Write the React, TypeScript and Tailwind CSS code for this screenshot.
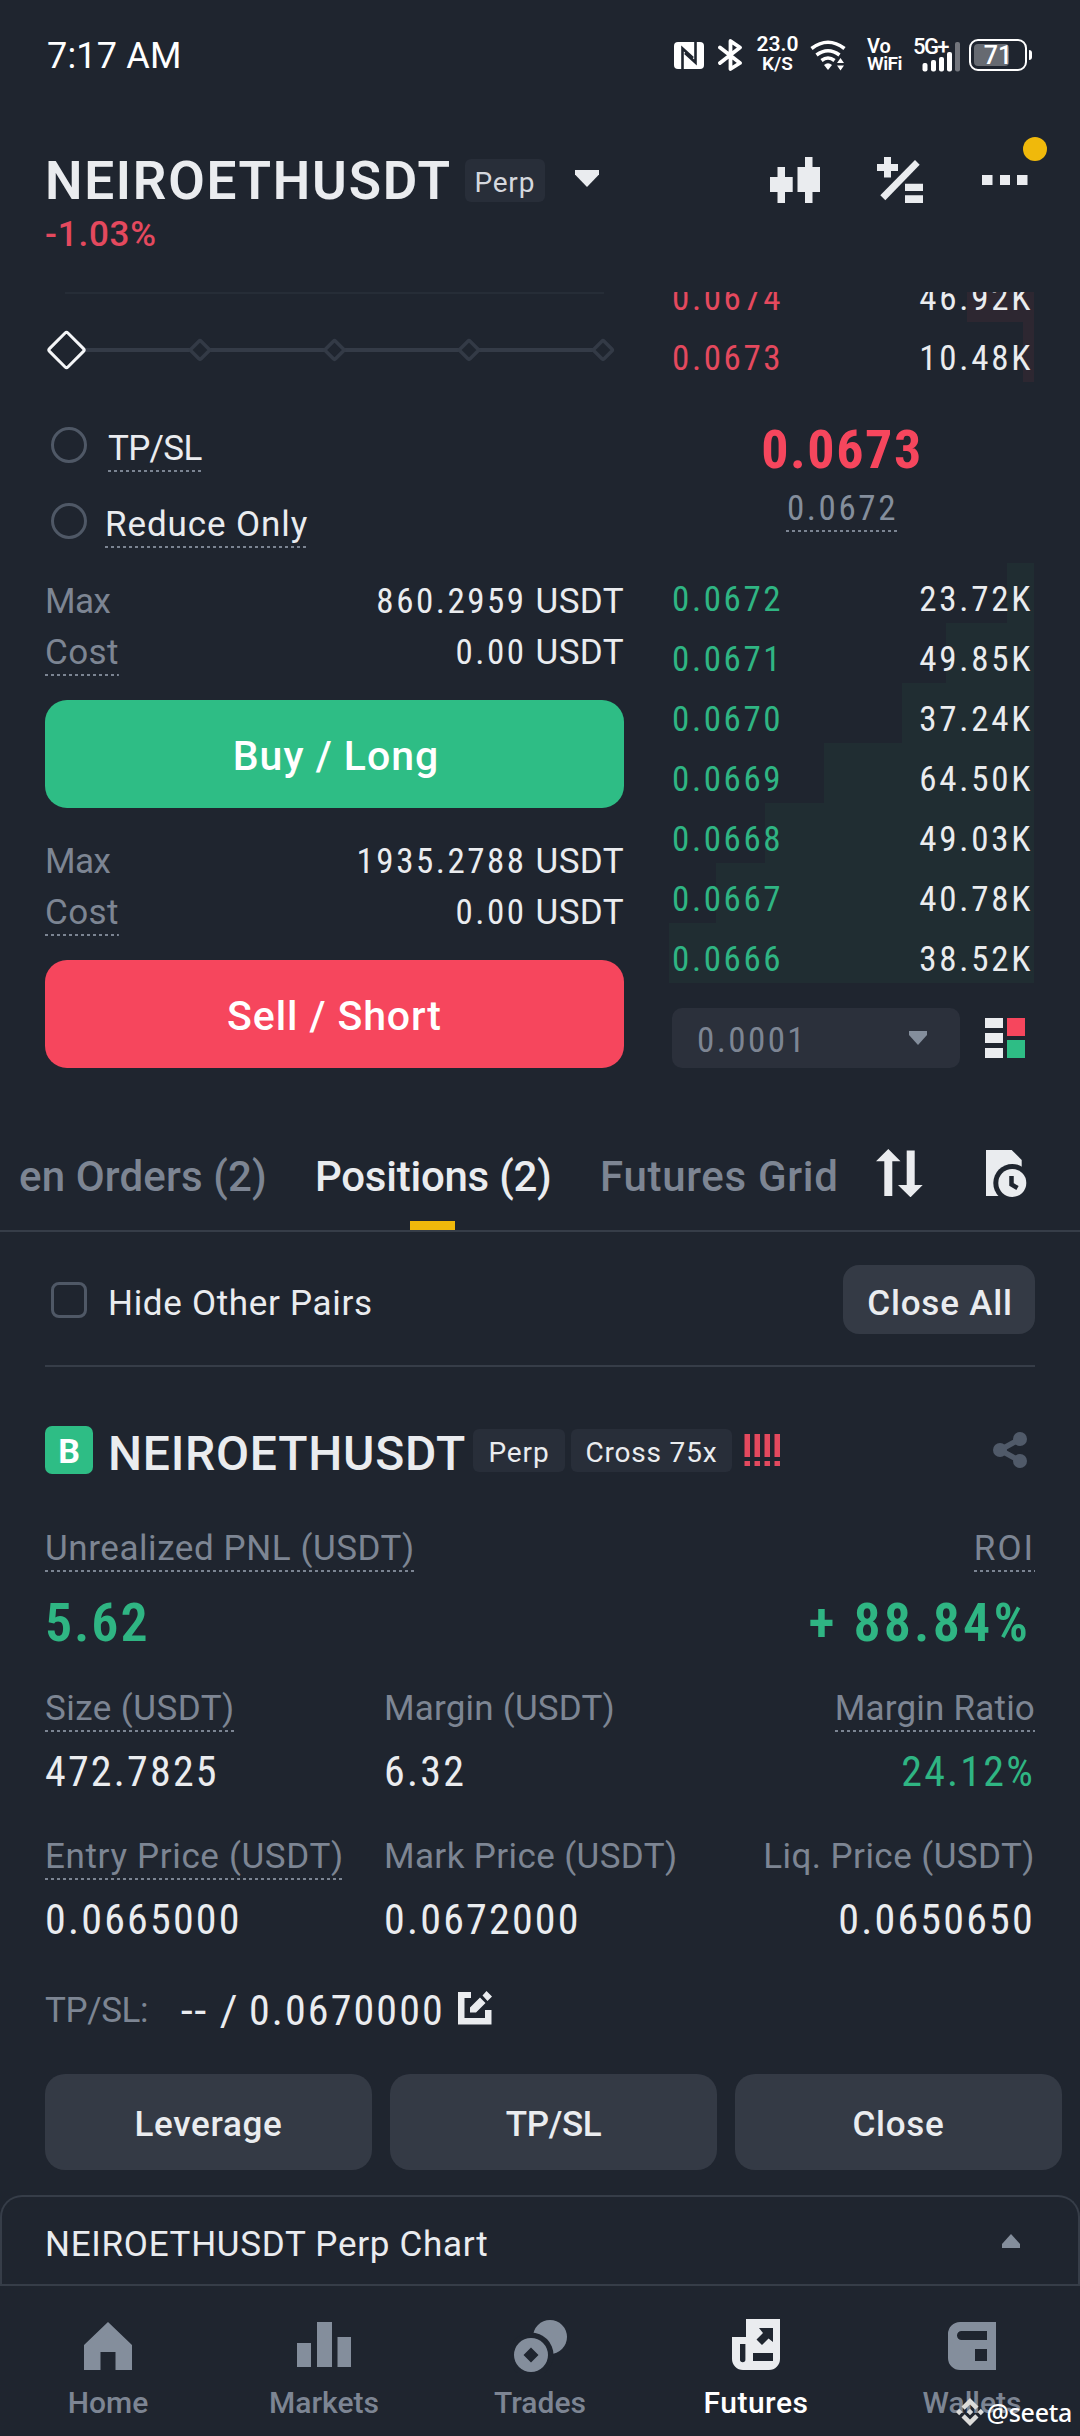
import type { ReactNode } from 'react';

const bids = [
  { price: '0.0672', size: '23.72K', depth: 27 },
  { price: '0.0671', size: '49.85K', depth: 88 },
  { price: '0.0670', size: '37.24K', depth: 132 },
  { price: '0.0669', size: '64.50K', depth: 210 },
  { price: '0.0668', size: '49.03K', depth: 269 },
  { price: '0.0667', size: '40.78K', depth: 318 },
  { price: '0.0666', size: '38.52K', depth: 365 },
];

const asks = [
  { price: '0.0674', size: '46.92K', depth: 67 },
  { price: '0.0673', size: '10.48K', depth: 11 },
];

function Hint({ children, className = '' }: { children: ReactNode; className?: string }) {
  return (
    <span
      className={`block h-[47px] leading-[48px] bg-[repeating-linear-gradient(90deg,#7b8492_0_3px,transparent_3px_6px)] bg-[length:100%_2px] bg-bottom bg-no-repeat ${className}`}
    >
      {children}
    </span>
  );
}

function StatusBar() {
  return (
    <div className="flex h-[110px] items-center justify-between pl-[47px] pr-[48px] text-white">
      <span className="pt-px text-[36px] tracking-[0.2px]">7:17 AM</span>
      <div className="flex items-center font-medium">
        <svg width="30" height="27" viewBox="0 0 30 27" className="mr-[14px]">
          <rect width="30" height="27" rx="4" fill="#fff" />
          <path d="M8.5 27V6.5L19 16M21.5 0V20.5L11 11" fill="none" stroke="#1f252f" strokeWidth="2.6" />
        </svg>
        <svg width="25" height="32" viewBox="0 0 25 32" className="mr-[15px]">
          <path d="M2 8.5L22 24L12.5 30V2L22 8.5L2 24" fill="none" stroke="#fff" strokeWidth="3.8" strokeLinejoin="round" strokeLinecap="round" />
        </svg>
        <div className="mr-[13px] flex w-[39px] flex-col items-center -mt-[3px]">
          <span className="text-[21px] font-semibold leading-[20px]">23.0</span>
          <span className="text-[19px] font-semibold leading-[20px]">K/S</span>
        </div>
        <svg width="37" height="31" viewBox="0 0 37 31" className="mr-[20px]">
          <g fill="none" stroke="#fff" strokeWidth="3.6">
            <path d="M1.5 8.5Q18 -4 34.5 8.5" />
            <path d="M6.5 15Q18 6.5 29.5 15" />
            <path d="M11.5 20.5Q18 15.5 24.5 20.5" />
          </g>
          <path d="M14 25Q18 21.5 22 25L18 30Z" fill="#fff" />
          <path d="M30.5 18L34 23H27ZM30.5 30.5L27 25.5H34Z" fill="#fff" />
        </svg>
        <div className="mr-[11px] flex w-[35px] flex-col -mt-px font-semibold">
          <span className="text-[20px] leading-[18px]">Vo</span>
          <span className="text-[19px] leading-[18px] tracking-[-0.5px]">WiFi</span>
        </div>
        <div className="relative mr-[9px] h-[34px] w-[47px]">
          <span className="block text-[22px] leading-[17px] tracking-[-1.6px]">5G+</span>
          <svg width="47" height="34" viewBox="0 0 47 34" className="absolute inset-0">
            <g fill="#fff">
              <rect x="9.5" y="25" width="5" height="8.5" rx="2" />
              <rect x="18" y="22" width="5" height="11.5" rx="2" />
              <rect x="26" y="19" width="5" height="14.5" rx="2" />
              <rect x="34" y="14" width="5" height="19.5" rx="2" />
            </g>
            <rect x="42" y="4" width="5" height="29.5" rx="2" fill="#73767d" />
          </svg>
        </div>
        <div className="relative flex h-[32px] w-[58px] items-center justify-center rounded-[9px] border-2 border-white">
          <div className="absolute left-[3px] top-[3px] h-[22px] w-[35px] rounded-[4px] bg-[#666a71]" />
          <span className="relative text-[25px] leading-none">71</span>
        </div>
        <div className="ml-[2px] h-[10px] w-[3px] rounded-r bg-white" />
      </div>
    </div>
  );
}

function Header() {
  return (
    <header className="relative h-[182px] pl-[45px] pr-[52px] pt-[30px]">
      <div className="flex h-[80px] items-center">
        <h1 className="pt-[2px] text-[53px] font-semibold leading-[80px] tracking-[1.72px]">NEIROETHUSDT</h1>
        <span className="ml-[13px] h-[43px] w-[80px] rounded-[6px] bg-[#282e39] text-center text-[28px] leading-[47px] tracking-[0.8px] text-[#d5d8de]">
          Perp
        </span>
        <svg width="24" height="17" viewBox="0 0 24 17" className="ml-[30px] -mt-[4px]">
          <path d="M0 0H24V4.5L12 17L0 4.5Z" fill="#eaecef" />
        </svg>
        <svg width="50" height="46" viewBox="0 0 50 46" className="ml-auto" fill="#eaecef">
          <path d="M7.5 10H15V20H22.7V35H15V46H7.5V35H0V20H7.5Z" />
          <path d="M35 0H42.5V10H50V35H42.5V46H35V35H27.5V10H35Z" />
        </svg>
        <svg width="46" height="46" viewBox="0 0 46 46" className="ml-[57px]" fill="#eaecef">
          <path d="M7 0H14V7H21V14H14V20.5H7V14H0V7H7Z" />
          <path d="M38 3L42.7 7.7L8.3 43.3L3.3 38.3Z" />
          <path d="M28 26.7H46V34H28ZM28 38.2H46V46H28Z" />
        </svg>
        <svg width="46" height="10" viewBox="0 0 46 10" className="ml-[59px]" fill="#eaecef">
          <path d="M0 0H10.5V10H0ZM18 0H28V10H18ZM35 0H45.5V10H35Z" />
        </svg>
      </div>
      <span className="absolute right-[33px] top-[27px] size-[24px] rounded-full bg-[#f0b90b]" />
      <div className="-mt-[9px] text-[35px] font-medium leading-[48px] tracking-[0.8px] text-[#e4495e]">-1.03%</div>
    </header>
  );
}

function Slider() {
  return (
    <svg width="579" height="50" viewBox="0 0 579 50" className="mt-[31px]" fill="#1f252f">
      <path d="M40 25H558" stroke="#343b47" strokeWidth="4" />
      {[155, 289.5, 424, 558].map((x) => (
        <rect key={x} x={x - 7} y="18" width="14" height="14" rx="1.5" transform={`rotate(45 ${x} 25)`} stroke="#333a46" strokeWidth="3.5" />
      ))}
      <rect x="8.5" y="12" width="26" height="26" rx="2" transform="rotate(45 21.5 25)" stroke="#f5f6f8" strokeWidth="3" />
    </svg>
  );
}

function Amount({ value }: { value: string }) {
  return (
    <span>
      <span className="tracking-[2.5px] font-stretch-[87%]">{value}</span> USDT
    </span>
  );
}

function Amounts({ max }: { max: string }) {
  return (
    <div className="text-[35px] tracking-[0.38px]">
      <div className="flex h-[46px] justify-between leading-[48px]">
        <span className="text-[#7d8593] tracking-[-0.5px]">Max</span>
        <Amount value={max} />
      </div>
      <div className="mt-[5px] flex justify-between leading-[48px]">
        <Hint className="text-[#7d8593]">Cost</Hint>
        <Amount value="0.00" />
      </div>
    </div>
  );
}

function OrderForm() {
  return (
    <div className="w-[579px]">
      <div className="mx-[20px] h-[2px] bg-[#262d37]" />
      <Slider />
      <div className="mt-[50px] flex items-start gap-[21px] pl-[6px] text-[35px]">
        <span className="mt-[2px] size-[36px] rounded-full border-3 border-[#4f5866]" />
        <Hint className="tracking-[-0.7px]">TP/SL</Hint>
      </div>
      <div className="mt-[29px] flex items-start gap-[18px] pl-[6px] text-[35px]">
        <span className="mt-[2px] size-[36px] rounded-full border-3 border-[#4f5866]" />
        <Hint className="tracking-[0.9px]">Reduce Only</Hint>
      </div>
      <div className="mt-[30px]">
        <Amounts max="860.2959" />
      </div>
      <button className="mt-[23px] block h-[108px] w-full rounded-[22px] bg-[#2ebd85] pl-[3px] pt-[5px] text-[41px] font-medium tracking-[1px] text-white">
        Buy / Long
      </button>
      <div className="mt-[30px]">
        <Amounts max="1935.2788" />
      </div>
      <button className="mt-[23px] block h-[108px] w-full rounded-[22px] bg-[#f6465d] pt-[5px] text-[41px] font-medium tracking-[0.9px] text-white">
        Sell / Short
      </button>
    </div>
  );
}

function BookRow({ row, side }: { row: (typeof bids)[number]; side: 'ask' | 'bid' }) {
  return (
    <div className="relative h-[60px] pl-[3px] pr-px pt-[12px] text-[35px] leading-[49px]">
      <div
        className={`absolute right-0 top-0 h-full ${side === 'ask' ? 'bg-[#2d2731]' : 'bg-[#202d32]'}`}
        style={{ width: row.depth }}
      />
      <div className="relative flex justify-between font-stretch-[87%]">
        <span className={`tracking-[2.6px] ${side === 'ask' ? 'text-[#e4495e]' : 'text-[#2fb583]'}`}>{row.price}</span>
        <span className="tracking-[2.7px]">{row.size}</span>
      </div>
    </div>
  );
}

function OrderBook() {
  return (
    <div className="-mt-[30px] w-[365px]">
      {asks.map((row) => (
        <BookRow key={row.price} row={row} side="ask" />
      ))}
      <div className="mt-[38px] flex flex-col items-center pr-[19px]">
        <span className="text-[54px] font-bold leading-[60px] tracking-[1.6px] font-stretch-[87%] text-[#f6465d]">0.0673</span>
        <Hint className="mt-[5px] pl-px text-[35px] tracking-[2.6px] font-stretch-[87%] text-[#848e9c]">0.0672</Hint>
      </div>
      <div className="mt-[31px]">
        {bids.map((row) => (
          <BookRow key={row.price} row={row} side="bid" />
        ))}
      </div>
      <div className="mt-[25px] flex items-center pl-[3px]">
        <div className="flex h-[60px] w-[288px] items-center justify-between rounded-[10px] bg-[#2b303b] pl-[25px] pr-[33px]">
          <span className="pt-[5px] text-[35px] leading-none tracking-[2.4px] font-stretch-[87%] text-[#7d8593]">0.0001</span>
          <svg width="18" height="14" viewBox="0 0 18 14">
            <path d="M0 0H18V4L9 14L0 4Z" fill="#848e9c" />
          </svg>
        </div>
        <svg width="40" height="40" viewBox="0 0 40 40" className="ml-[25px]">
          <path d="M0 0H18V10H0ZM0 15H18V25H0ZM0 30H18V40H0Z" fill="#eaecef" />
          <path d="M22 0H40V18H22Z" fill="#f6465d" />
          <path d="M22 22H40V40H22Z" fill="#2ebd85" />
        </svg>
      </div>
    </div>
  );
}

function Tabs() {
  return (
    <nav className="flex h-[140px] border-b-2 border-[#363d48] pl-[19px] text-[42px] font-medium">
      <span className="w-[296px] pt-[45px] leading-[80px] tracking-[0.15px] text-[#7d8593]">en Orders (2)</span>
      <span className="relative w-[285px] pt-[45px] leading-[80px] tracking-[-0.25px]">
        Positions (2)
        <span className="absolute bottom-0 left-[95px] h-[9px] w-[45px] bg-[#f0b90b]" />
      </span>
      <span className="w-[276px] pt-[45px] leading-[80px] tracking-[0.7px] text-[#7d8593]">Futures Grid</span>
      <svg width="47" height="48" viewBox="0 0 47 48" className="mt-[57px]" fill="#eaecef">
        <path d="M12.3 0L24.5 12.3H16.3V47H8.3V12.3H0Z" />
        <path d="M30.7 1.5H38.7V36H46.7L34.5 48.3L22 36H30.7Z" />
      </svg>
      <svg width="42" height="48" viewBox="0 0 42 48" className="ml-[63px] mt-[58px]">
        <path d="M0 0H25.7L35.7 10V46H0Z" fill="#eaecef" />
        <circle cx="26.3" cy="33" r="19" fill="#1f252f" />
        <circle cx="26.3" cy="33" r="14" fill="#eaecef" />
        <path d="M25.5 26V34.5L31.5 38" fill="none" stroke="#1f252f" strokeWidth="4.5" />
      </svg>
    </nav>
  );
}

function Filters() {
  return (
    <div className="mx-[45px] flex h-[135px] items-start border-b-2 border-[#363d48] pt-[33px]">
      <span className="ml-[6px] mt-[17px] size-[36px] rounded-[8px] border-3 border-[#4f5866]" />
      <span className="ml-[21px] text-[35px] leading-[78px] tracking-[0.69px]">Hide Other Pairs</span>
      <button className="ml-auto h-[69px] w-[192px] rounded-[16px] bg-[#343a45] pl-[2px] pt-[7px] text-[35px] font-medium leading-[63px] tracking-[0.8px]">
        Close All
      </button>
    </div>
  );
}

type CellProps = { label: string; value: string; hint?: boolean; right?: boolean; className?: string };

function Cell({ label, value, hint, right, className = 'tracking-[0.45px]' }: CellProps) {
  return (
    <div className={`flex flex-col ${right ? 'ml-auto items-end' : 'items-start'} ${className}`}>
      {hint ? (
        <Hint className="text-[35px] text-[#7d8593]">{label}</Hint>
      ) : (
        <span className="h-[47px] text-[35px] leading-[48px] text-[#7d8593]">{label}</span>
      )}
      <span className={`mt-[15px] text-[42px] leading-[50px] tracking-[2.2px] font-stretch-[87%] ${value.endsWith('%') ? 'text-[#2fb583]' : ''}`}>
        {value}
      </span>
    </div>
  );
}

function Position() {
  return (
    <section className="px-[45px]">
      <div className="mt-[59px] flex h-[48px] items-center">
        <span className="size-[48px] rounded-[7px] bg-[#2ebd85] text-center text-[34px] font-bold leading-[50px] text-white">B</span>
        <span className="ml-[15px] pt-[7px] text-[48px] font-medium leading-none tracking-[0.76px]">NEIROETHUSDT</span>
        <span className="ml-[7px] h-[43px] w-[92px] rounded-[6px] bg-[#282e39] text-center text-[28px] leading-[48px] tracking-[0.9px]">Perp</span>
        <span className="ml-[6px] h-[43px] w-[161px] rounded-[6px] bg-[#282e39] text-center text-[28px] leading-[48px] tracking-[0.8px]">Cross 75x</span>
        <svg width="37" height="32" viewBox="0 0 37 32" className="ml-[12px]" fill="#e4495e">
          {[0.5, 10.5, 20.5, 30.5].map((x) => (
            <g key={x}>
              <rect x={x} width="5.5" height="23" />
              <rect x={x} y="27" width="5.5" height="5" />
            </g>
          ))}
        </svg>
        <svg width="34" height="36" viewBox="0 0 34 36" className="ml-auto mr-[8px]" fill="#505a69">
          <path d="M27 7L7 18L27 29" fill="none" stroke="#505a69" strokeWidth="5.5" />
          <circle cx="7" cy="18" r="7" />
          <circle cx="27" cy="7" r="7" />
          <circle cx="27" cy="29" r="7" />
        </svg>
      </div>
      <div className="mt-[51px] flex justify-between">
        <Hint className="text-[35px] tracking-[0.57px] text-[#7d8593]">Unrealized PNL (USDT)</Hint>
        <Hint className="text-[35px] tracking-[2px] text-[#7d8593]">ROI</Hint>
      </div>
      <div className="mt-[20px] flex justify-between pr-[4px] pt-px text-[54px] font-semibold leading-[59px] font-stretch-[87%] text-[#2fb583]">
        <span className="tracking-[1.9px]">5.62</span>
        <span className="tracking-[3.2px]">+ 88.84%</span>
      </div>
      <div className="mt-[33px] flex">
        <Cell label="Size (USDT)" value="472.7825" hint className="w-[339px] tracking-[0.45px]" />
        <Cell label="Margin (USDT)" value="6.32" className="tracking-[0.2px]" />
        <Cell label="Margin Ratio" value="24.12%" hint right className="tracking-[0.2px]" />
      </div>
      <div className="mt-[36px] flex">
        <Cell label="Entry Price (USDT)" value="0.0665000" hint className="w-[339px] tracking-[0.65px]" />
        <Cell label="Mark Price (USDT)" value="0.0672000" className="tracking-[0.39px]" />
        <Cell label="Liq. Price (USDT)" value="0.0650650" right />
      </div>
      <div className="mt-[43px] flex h-[46px] items-center text-[42px] leading-[46px]">
        <span className="w-[136px] text-[35px] tracking-[-0.4px] text-[#7d8593]">TP/SL:</span>
        <span className="w-[68px] tracking-[1.8px]">-- /</span>
        <span className="w-[209px] tracking-[2.1px] font-stretch-[87%]">0.0670000</span>
        <svg width="34" height="34" viewBox="0 0 34 34" className="-mt-[6px]" fill="#eaecef">
          <path d="M0 1H13V7H6.5V27H27V19H33.5V33.5H0Z" />
          <path d="M12 16.5L22 6.5L27.5 12L18 21.5H12ZM24.5 4.5L28.5 0L34 5.5L29.5 10Z" />
        </svg>
      </div>
      <div className="mt-[40px] flex w-[1017px] gap-[18px] text-[35px] font-medium tracking-[0.7px]">
        <button className="h-[96px] flex-1 rounded-[20px] bg-[#343a45] pt-[6px]">Leverage</button>
        <button className="h-[96px] flex-1 rounded-[20px] bg-[#343a45] pt-[6px] tracking-[-0.38px]">TP/SL</button>
        <button className="h-[96px] flex-1 rounded-[20px] bg-[#343a45] pt-[6px]">Close</button>
      </div>
    </section>
  );
}

function NavItem({ label, active, children }: { label: string; active?: boolean; children: ReactNode }) {
  return (
    <div className={`flex w-[216px] flex-col items-center ${active ? 'text-[#eaecef]' : 'text-[#848e9c]'}`}>
      <svg width="54" height="54" viewBox="0 0 54 54" fill="currentColor" fillRule="evenodd">
        {children}
      </svg>
      <span className={`mt-[10px] text-[30px] font-medium leading-[40px] ${active ? 'tracking-[0.5px] text-white' : 'text-[#7d8593]'}`}>{label}</span>
    </div>
  );
}

function BottomNav() {
  return (
    <nav className="relative flex h-[152px] border-t-2 border-[#363d48] pt-[33px]">
      <NavItem label="Home">
        <path d="M27 3L51 26V51H34.5V33H19.5V51H3V26Z" />
      </NavItem>
      <NavItem label="Markets">
        <path d="M0 24H14V48H0ZM20 3H35V48H20ZM40.5 18H54V48H40.5Z" />
      </NavItem>
      <NavItem label="Trades">
        <circle cx="37" cy="18" r="17" />
        <circle cx="18" cy="36" r="22.5" fill="#1f252f" />
        <path d="M18 19A17 17 0 1 1 18 53A17 17 0 1 1 18 19ZM18 28.5L10.5 36L18 43.5L25.5 36Z" />
      </NavItem>
      <NavItem label="Futures" active>
        <path d="M17 0H51V40A11 11 0 0 1 40 51H14A11 11 0 0 1 3 40V18H17ZM11 25V40.5A2.7 2.7 0 0 0 16.4 40.5V25ZM24 34V42H44V34ZM30 9L34 14L27.5 20.5L33 26L39.5 19.5L44 23V9Z" />
      </NavItem>
      <NavItem label="Wallets">
        <path d="M15 3H51V51H15A12 12 0 0 1 3 39V15A12 12 0 0 1 15 3ZM16.5 12A4.5 4.5 0 0 0 16.5 21H42V12ZM30 30V42H42V30Z" />
      </NavItem>
      <div className="absolute right-[8px] bottom-[7px] flex items-center gap-[3px] font-['Noto_Sans',sans-serif] text-[25px] font-medium leading-[34px] tracking-[-0.3px] text-white">
        <svg width="28" height="28" viewBox="0 0 28 28" fill="#dcdcda">
          <path d="M14 0L22.5 8.5L19.3 11.7L14 6.4L8.7 11.7L5.5 8.5ZM14 28L5.5 19.5L8.7 16.3L14 21.6L19.3 16.3L22.5 19.5ZM14 10.8L17.2 14L14 17.2L10.8 14ZM3.2 10.8L6.4 14L3.2 17.2L0 14ZM24.8 10.8L28 14L24.8 17.2L21.6 14Z" />
        </svg>
        @seeta
      </div>
    </nav>
  );
}

export default function App() {
  return (
    <div className="h-[2436px] w-[1080px] overflow-hidden bg-[#1f252f] font-['Roboto',sans-serif] text-[#eaecef]">
      <StatusBar />
      <Header />
      <section className="flex h-[800px] justify-between overflow-hidden pl-[45px] pr-[46px]">
        <OrderForm />
        <OrderBook />
      </section>
      <Tabs />
      <Filters />
      <Position />
      <div className="mt-[25px] flex h-[89px] items-center justify-between rounded-t-[22px] border-2 border-b-0 border-[#363d48] pl-[43px] pr-[58px]">
        <span className="pt-[7px] text-[35px] leading-none tracking-[0.72px]">NEIROETHUSDT Perp Chart</span>
        <svg width="18" height="14" viewBox="0 0 18 14">
          <path d="M9 0L18 10V14H0V10Z" fill="#848e9c" />
        </svg>
      </div>
      <BottomNav />
    </div>
  );
}
